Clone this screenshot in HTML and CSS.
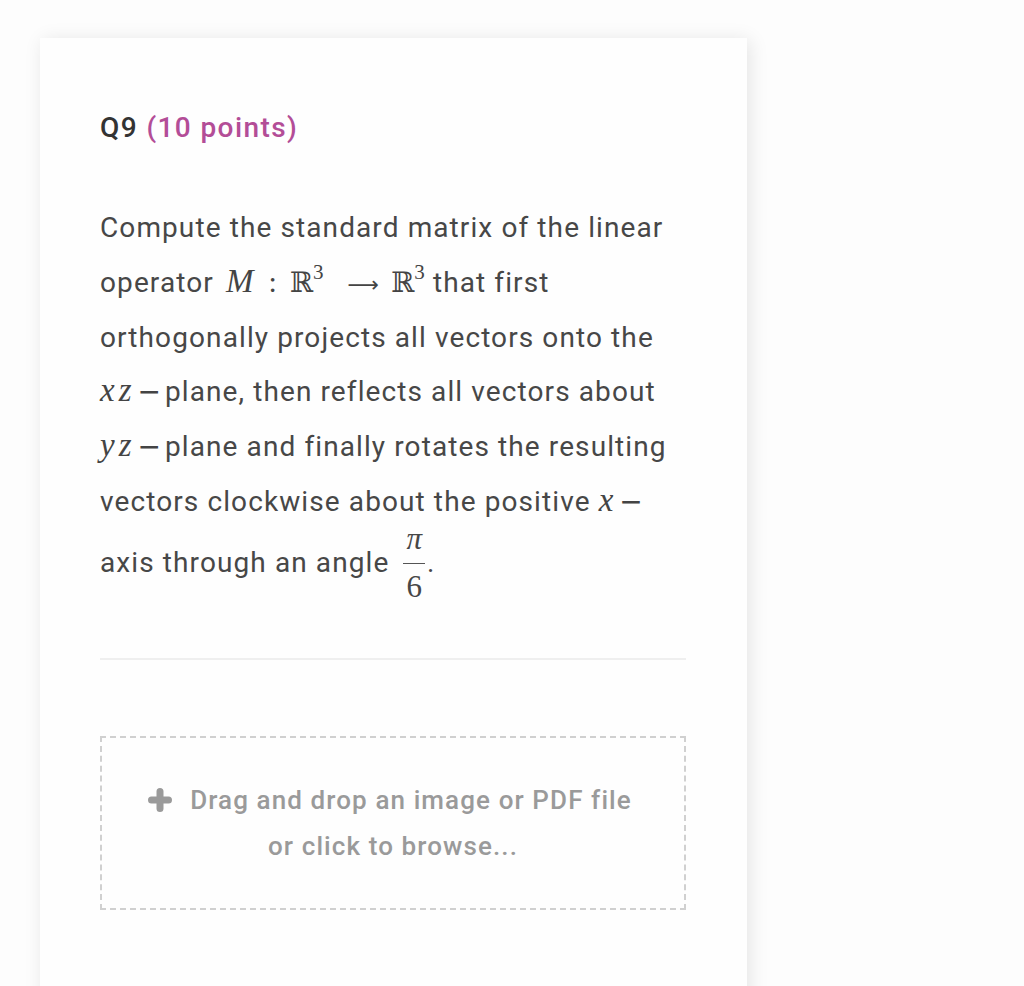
FILE: index.html
```html
<!DOCTYPE html>
<html>
<head>
<meta charset="utf-8">
<link rel="stylesheet" href="styles.css">
</head>
<body>
<div class="page">
  <div class="card">
    <h2 class="q-title">Q9 <span class="points">(10 points)</span></h2>
    <p class="q-body">Compute the standard matrix of the linear operator <span class="math"><i class="mv">M</i><span class="colon">:</span><span class="bb">ℝ</span><sup>3</sup><span class="arrow">⟶</span><span class="bb">ℝ</span><sup>3</sup></span> that first orthogonally projects all vectors onto the <span class="math"><i class="var">xz</i><span class="minus">−</span></span>plane, then reflects all vectors about <span class="math"><i class="var">yz</i><span class="minus">−</span></span>plane and finally rotates the resulting vectors clockwise about the positive <span class="math"><i class="var">x</i><span class="minus">−</span></span> axis through an angle <span class="frac"><span class="num">π</span><span class="den">6</span></span>.</p>
    <hr class="divider">
    <div class="dropzone">
      <div class="drop-line">
        <svg class="plus" width="24" height="24" viewBox="0 0 24 24"><path d="M12 3.5v17M3.5 12h17" stroke="#9a9a9a" stroke-width="7" stroke-linecap="round"/></svg>
        <span>Drag and drop an image or PDF file</span>
      </div>
      <div class="drop-line">or click to browse...</div>
    </div>
  </div>
</div>
</body>
</html>
```
FILE: styles.css
```css
html, body {
  margin: 0;
  padding: 0;
  background: #fdfdfd;
  height: 100%;
  overflow: hidden;
}
.page {
  padding: 38px 0 0 40px;
}
.card {
  width: 586px;
  min-height: 1100px;
  padding: 70px 61px 0 60px;
  background: #fefefe;
  box-shadow: 3px 2px 18px rgba(0,0,0,0.1);
  font-family: Roboto, "Liberation Sans", sans-serif;
}
.q-title {
  margin: 0;
  font-size: 28px;
  font-weight: 500;
  letter-spacing: 1.4px;
  color: #333;
  line-height: 40px;
}
.points {
  color: #b34d97;
}
.q-body {
  margin: 53px 0 0;
  font-size: 28px;
  letter-spacing: 1.1px;
  line-height: 54.8px;
  color: #474747;
}
.math {
  font-family: "Liberation Serif", "DejaVu Serif", serif;
  font-size: 33px;
  line-height: 20px;
  letter-spacing: 0;
  color: #444;
}
.math i {
  font-style: italic;
  letter-spacing: 1px;
}
.math .var {
  letter-spacing: 4px;
}
.mv {
  margin-left: 4px;
}
.colon {
  margin: 0 13px 0 14px;
  font-size: 30px;
}
.bb {
  font-family: "DejaVu Serif", serif;
  font-size: 28px;
  font-style: normal;
}
.math sup {
  font-size: 21px;
  line-height: 0;
  vertical-align: 13px;
}
.arrow {
  font-family: "DejaVu Sans", sans-serif;
  font-size: 22px;
  margin: 0 12px 0 24px;
}
.minus {
  font-family: "DejaVu Sans", sans-serif;
  font-size: 28px;
  margin: 0 4px 0 2px;
}
.frac {
  display: inline-flex;
  flex-direction: column;
  align-items: center;
  vertical-align: 23px;
  font-family: "Liberation Serif", "DejaVu Serif", serif;
  font-size: 31px;
  margin: -6px 2px -14px 6px;
  letter-spacing: 0;
}
.frac .num {
  font-style: italic;
  line-height: 30px;
  border-bottom: 1.5px solid #555;
  padding: 0 3px 9px;
}
.frac .den {
  line-height: 30px;
  padding-top: 8px;
}
.divider {
  border: 0;
  border-top: 2px solid #efefef;
  margin: 67px 0 0;
}
.dropzone {
  margin-top: 76px;
  height: 170px;
  border: 2px dashed #d0d0d0;
  display: flex;
  flex-direction: column;
  justify-content: center;
  align-items: center;
  color: #9a9a9a;
  font-size: 26px;
  font-weight: 500;
  letter-spacing: 1.1px;
  line-height: 46px;
}
.drop-line {
  display: flex;
  align-items: center;
  gap: 18px;
}
.drop-line:first-child {
  margin-left: -6px;
}
.plus {
  flex: none;
}
```
